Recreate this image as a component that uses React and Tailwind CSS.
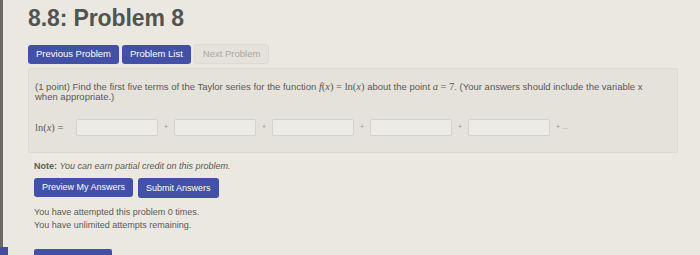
import React from "react";

const Box = () => (
  <span className="inline-block h-[17px] w-[82px] rounded-[2px] border border-[#d4d2cb] bg-[#edebe5]" />
);

const Plus = ({ children = "+" }) => (
  <span className="w-[16px] text-center text-[7px] text-[#9a988f]">{children}</span>
);

export default function App() {
  return (
    <div className="relative flex h-[255px] w-[700px] overflow-hidden bg-[#ebe8e1] font-['Liberation_Sans',sans-serif]">
      {/* screen bezel on the left */}
      <div className="w-[3px] shrink-0 bg-[#6b6964]" />

      <div className="flex flex-1 flex-col pl-[25px] pr-[22px]">
        <h1 className="mt-[5px] text-[23px] font-bold leading-[27px] tracking-[-0.1px] text-[#545350]">
          8.8: Problem 8
        </h1>

        <div className="mt-[12px] flex items-center gap-[3px]">
          <button className="h-[19px] rounded-[3px] bg-[#4350a8] px-[8px] text-[9.5px] leading-none text-white">
            Previous Problem
          </button>
          <button className="h-[19px] rounded-[3px] bg-[#4350a8] px-[8px] text-[9.5px] leading-none text-white">
            Problem List
          </button>
          <button className="h-[20px] rounded-[3px] border border-[#dcdad2] bg-[#e4e2db] px-[8px] text-[9.5px] leading-none text-[#a9a79f]">
            Next Problem
          </button>
        </div>

        <div className="mt-[4px] h-[87px] rounded-[2px] border border-[#dddbd3] bg-[#e4e2da] pl-[6px] pt-[13px]">
          <p className="text-[9.5px] leading-[10px] text-[#5b5a56]">
            (1 point) Find the first five terms of the Taylor series for the function{" "}
            <span className="font-['Liberation_Serif',serif] text-[10.5px] italic">f</span>
            <span className="font-['Liberation_Serif',serif] text-[10.5px]">(<i>x</i>) = ln(<i>x</i>)</span>{" "}
            about the point{" "}
            <span className="font-['Liberation_Serif',serif] text-[10.5px]"><i>a</i> = 7</span>. (Your answers should include the variable x
            <br />
            when appropriate.)
          </p>
          <div className="mt-[17px] flex items-center">
            <span className="w-[41px] font-['Liberation_Serif',serif] text-[10.5px] text-[#5b5a56]">
              ln(<i>x</i>) =
            </span>
            <Box />
            <Plus />
            <Box />
            <Plus />
            <Box />
            <Plus />
            <Box />
            <Plus />
            <Box />
            <span className="pl-[6px] text-[7px] text-[#9a988f]">+ ...</span>
          </div>
        </div>

        <div className="pl-[6px]">
          <p className="mt-[7px] text-[9px] text-[#5b5a56]">
            <b>Note:</b> <i>You can earn partial credit on this problem.</i>
          </p>
          <div className="mt-[5px] flex gap-[5px]">
            <button className="h-[19px] rounded-[3px] bg-[#4350a8] px-[8px] text-[9px] leading-none text-white">
              Preview My Answers
            </button>
            <button className="h-[20px] rounded-[3px] bg-[#4350a8] px-[8px] text-[9px] leading-none text-white">
              Submit Answers
            </button>
          </div>
          <p className="mt-[8px] text-[9px] leading-[13px] text-[#5b5a56]">
            You have attempted this problem 0 times.
            <br />
            You have unlimited attempts remaining.
          </p>
          <div className="mt-[17px] h-[6px] w-[78px] rounded-t-[2px] bg-[#4350a8]" />
        </div>
      </div>

      <div className="absolute bottom-0 left-0 h-[8px] w-[8px] bg-[#3f4e9e]" />
    </div>
  );
}
